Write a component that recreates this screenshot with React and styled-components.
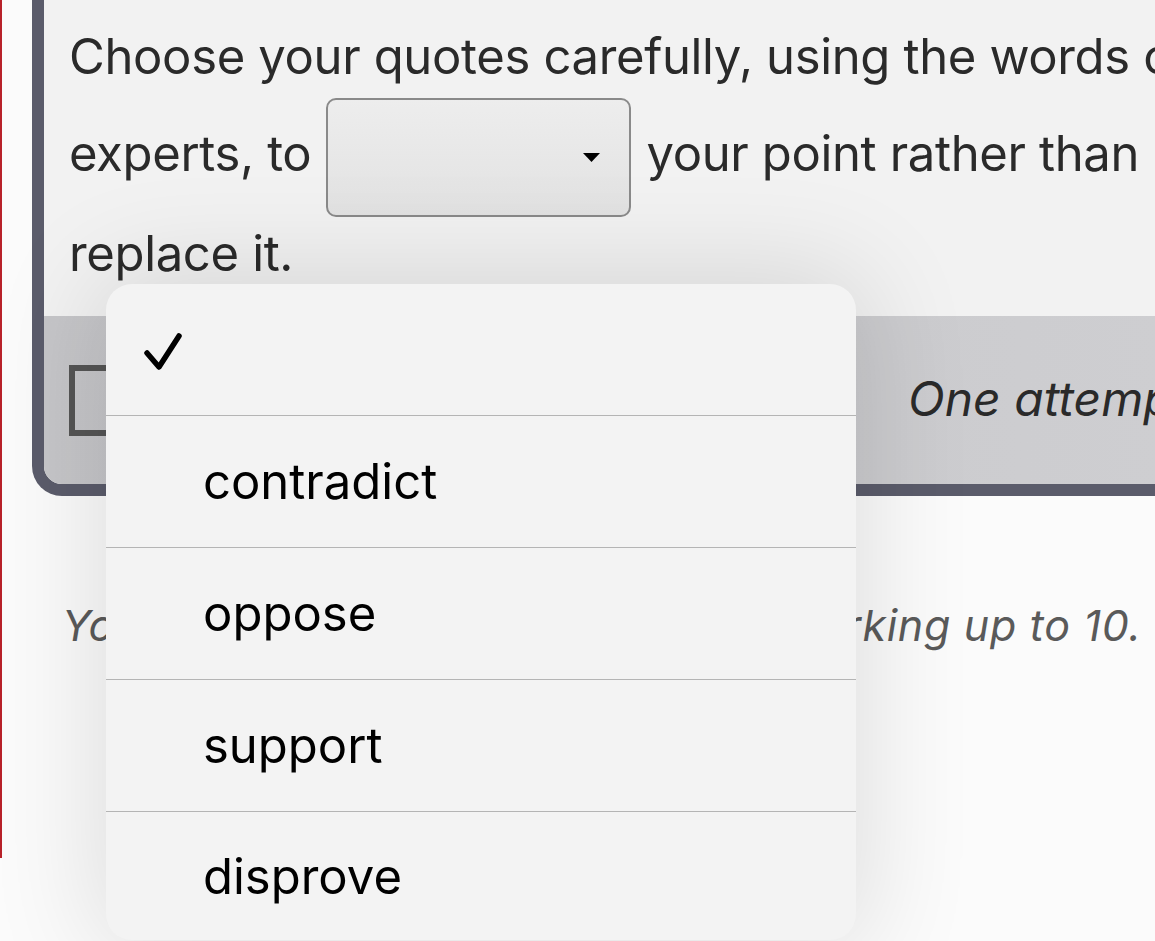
import React from "react";
import styled, { createGlobalStyle } from "styled-components";

const GlobalStyle = createGlobalStyle`
  html, body {
    margin: 0;
    padding: 0;
    background: #fbfbfb;
    overflow: hidden;
  }
  body {
    font-family: Inter, "Noto Sans", "Liberation Sans", sans-serif;
  }
`;

const Page = styled.div`
  position: relative;
  width: 1155px;
  height: 941px;
  overflow: hidden;
  background: #fbfbfb;
`;

const Frame = styled.div`
  display: flow-root;
  height: 858px;
  border-left: 2px solid #b8222a;
  padding-left: 30px;
  box-sizing: border-box;
`;

const Card = styled.section`
  width: 1400px;
  margin-top: -40px;
  border: 12px solid #5b5c6b;
  border-top: none;
  border-radius: 0 0 30px 30px;
  overflow: hidden;
`;

const CardBody = styled.div`
  padding: 48px 0 14px 25px;
  background: #f2f2f2;
`;

const Prompt = styled.p`
  margin: 0;
  font-size: 49px;
  line-height: 97px;
  letter-spacing: -0.35px;
  color: #2a2a2a;
  white-space: nowrap;
`;

const Select = styled.span`
  display: inline-flex;
  align-items: center;
  justify-content: flex-end;
  box-sizing: border-box;
  width: 305px;
  height: 119px;
  margin: -12px 15px -12px 15px;
  padding-right: 29px;
  vertical-align: middle;
  border: 2px solid #8a8a8a;
  border-radius: 10px;
  background: linear-gradient(#ededed, #e2e2e2);
`;

const Footer = styled.div`
  display: flex;
  align-items: center;
  gap: 768px;
  height: 168px;
  padding-left: 25px;
  background: linear-gradient(90deg, #c6c6c9, #d0d0d3);
`;

const Checkbox = styled.span`
  width: 71px;
  height: 71px;
  box-sizing: border-box;
  border: 6px solid #555;
  flex: none;
`;

const Attempts = styled.span`
  font-size: 48px;
  font-style: italic;
  color: #2a2a2a;
  white-space: nowrap;
  margin-top: -4px;
`;

const Note = styled.p`
  margin: 104px 0 0 30px;
  font-size: 43px;
  line-height: 50px;
  letter-spacing: 0.7px;
  font-style: italic;
  color: #5a5a5a;
  white-space: nowrap;
`;

const Popover = styled.ul`
  position: absolute;
  left: 106px;
  top: 284px;
  width: 750px;
  height: 656px;
  margin: 0;
  padding: 0;
  list-style: none;
  border-radius: 26px;
  background: #f3f3f3;
  box-shadow: 0 0 110px 10px rgba(0, 0, 0, 0.12);
  overflow: hidden;
`;

const Option = styled.li`
  display: flex;
  align-items: center;
  height: ${(p) => p.$h}px;
  padding-left: 97px;
  position: relative;
  box-sizing: border-box;
  font-size: 49px;
  color: #000;
  border-top: ${(p) => (p.$first ? "none" : "1px solid #b4b4b4")};
`;

const Check = styled.svg`
  position: absolute;
  left: 37px;
  top: 48px;
`;

const Arrow = () => (
  <svg width="17" height="9" viewBox="0 0 17 9">
    <path d="M0 0 H17 L8.5 9 Z" fill="#000" />
  </svg>
);

const options = ["contradict", "oppose", "support", "disprove"];

export default function App() {
  return (
    <Page>
      <GlobalStyle />
      <Frame>
        <Card>
          <CardBody>
            <Prompt>
              Choose your quotes carefully, using the words of other
              <br />
              experts, to
              <Select>
                <Arrow />
              </Select>
              your point rather than
              <br />
              replace it.
            </Prompt>
          </CardBody>
          <Footer>
            <Checkbox />
            <Attempts>One attempt only.</Attempts>
          </Footer>
        </Card>
        <Note>You can check each answer, with marking up to 10.</Note>
      </Frame>
      <Popover>
        <Option $first $h={131}>
          <Check width="42" height="40" viewBox="0 0 42 40">
            <path
              d="M4 21 L16 35 L36 4"
              fill="none"
              stroke="#000"
              strokeWidth="5.5"
              strokeLinecap="round"
              strokeLinejoin="round"
            />
          </Check>
        </Option>
        {options.map((o) => (
          <Option key={o} $h={o === "disprove" ? 130 : 132}>
            {o}
          </Option>
        ))}
      </Popover>
    </Page>
  );
}
